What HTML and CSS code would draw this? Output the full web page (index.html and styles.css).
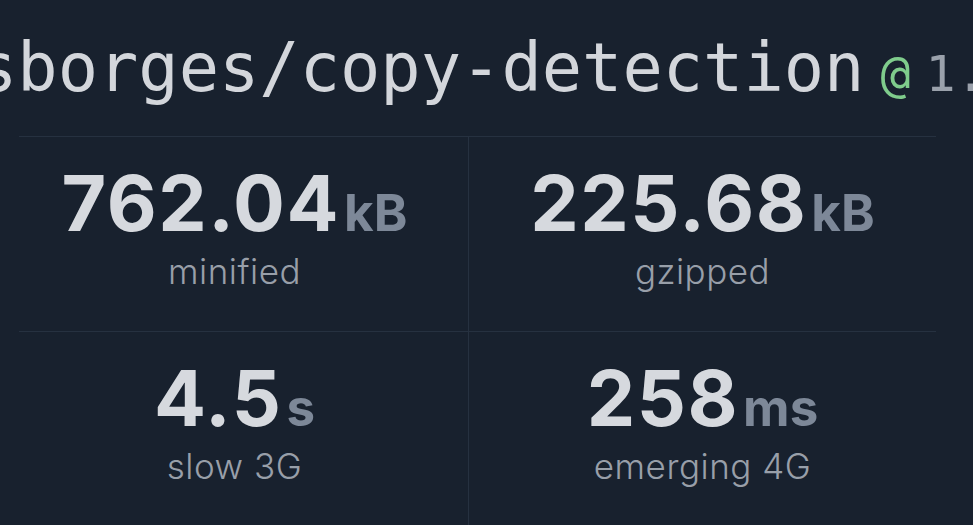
FILE: index.html
```html
<!DOCTYPE html>
<html lang="en">
<head>
<meta charset="utf-8">
<title>copy-detection bundle size</title>
<link rel="stylesheet" href="styles.css">
</head>
<body>
<header class="title"><span class="name">sborges/copy-detection</span><span class="at">@</span><span class="ver">1.0.0</span></header>
<section class="stats">
  <div class="cell cell-left">
    <div class="value">762.04<span class="unit">kB</span></div>
    <div class="label">minified</div>
  </div>
  <div class="cell cell-right">
    <div class="value">225.68<span class="unit">kB</span></div>
    <div class="label">gzipped</div>
  </div>
  <div class="cell cell-left">
    <div class="value">4.5<span class="unit">s</span></div>
    <div class="label">slow 3G</div>
  </div>
  <div class="cell cell-right">
    <div class="value">258<span class="unit">ms</span></div>
    <div class="label">emerging 4G</div>
  </div>
</section>
</body>
</html>
```
FILE: styles.css
```css
html, body {
  margin: 0;
  padding: 0;
  background: #18212e;
  overflow: hidden;
  width: 973px;
  height: 525px;
}

.title {
  box-sizing: border-box;
  height: 136px;
  font-family: "DejaVu Sans Mono", monospace;
  font-size: 67px;
  line-height: 80px;
  color: #d3d6db;
  white-space: nowrap;
  overflow: hidden;
  padding-top: 28px;
}

.name {
  display: inline-block;
  margin-left: -23px;
}

.at {
  font-size: 50px;
  line-height: 60px;
  color: #7fcc8c;
  margin-left: 16px;
}

.ver {
  font-size: 50px;
  line-height: 60px;
  color: #9aa1ab;
  margin-left: 15px;
}

.stats {
  display: grid;
  grid-template-columns: 449px 468px;
  grid-template-rows: 195px 195px;
  margin-left: 19px;
}

.cell {
  box-sizing: border-box;
  border-top: 1px solid #263140;
  display: flex;
  flex-direction: column;
  align-items: center;
  padding-top: 28px;
  font-family: Inter, "Noto Sans", sans-serif;
}

.cell-left {
  padding-right: 18px;
}

.cell-right {
  border-left: 1px solid #263140;
}

.value {
  font-size: 77px;
  line-height: 76px;
  font-weight: 700;
  color: #d6d9de;
  letter-spacing: 1.5px;
  white-space: nowrap;
}

.unit {
  font-size: 51px;
  color: #7d8898;
  margin-left: 4px;
  letter-spacing: 0;
}

.label {
  font-size: 35px;
  line-height: 40px;
  font-weight: 300;
  color: #989fa9;
  margin-top: 0;
  letter-spacing: 0.5px;
}
```
